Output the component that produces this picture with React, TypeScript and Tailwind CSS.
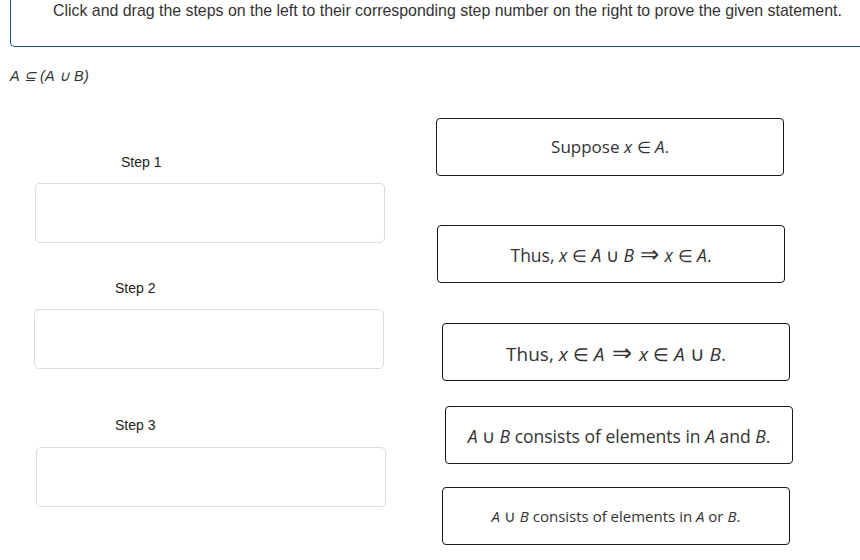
import React from "react";

const mathFont = { fontFamily: '"Open Sans", "Noto Sans", sans-serif' };

function I({ children }: { children: React.ReactNode }) {
  return <span className="italic">{children}</span>;
}

function Sym({ children, size = "text-[1em]" }: { children: React.ReactNode; size?: string }) {
  return (
    <span style={{ fontFamily: '"DejaVu Sans", sans-serif' }} className={`${size} font-light`}>
      {children}
    </span>
  );
}

function RightBox({ children, className }: { children: React.ReactNode; className: string }) {
  return (
    <div
      className={`w-[348px] h-[58px] border border-[#1a1a1a] rounded-[4px] flex items-center justify-center text-[#333] whitespace-pre ${className}`}
      style={mathFont}
    >
      {children}
    </div>
  );
}

function Step({ label, labelMl, boxMl, labelMt, boxMt }: { label: string; labelMl: string; boxMl: string; labelMt: string; boxMt: string }) {
  return (
    <div className="flex flex-col">
      <div className={`h-[20px] leading-[20px] text-[14px] text-[#222] ${labelMl} ${labelMt}`}>{label}</div>
      <div className={`w-[350px] h-[60px] border border-[#dcdcdc] rounded-[5px] ${boxMl} ${boxMt}`} />
    </div>
  );
}

const IN = () => <Sym size="text-[0.95em]">∈</Sym>;
const CUP = () => <Sym size="text-[1.05em]">∪</Sym>;
const IMP = () => (
  <span className="inline-block w-[1.75em] text-center">
    <Sym size="text-[1.3em]">⇒</Sym>
  </span>
);
const IMP2 = () => (
  <span className="inline-block w-[1.3em] text-center">
    <Sym size="text-[1.25em]">⇒</Sym>
  </span>
);

export default function App() {
  return (
    <div className="w-[860px] h-[560px] bg-white overflow-hidden relative" style={{ fontFamily: '"Liberation Sans", Arial, sans-serif' }}>
      <div className="ml-[10px] h-[47px] border-l border-b border-[#1f4f8f] rounded-bl-[5px] pl-[42px] text-[15.9px] leading-[22px] text-[#333]">
        Click and drag the steps on the left to their corresponding step number on the right to prove the given statement.
      </div>
      <div className="ml-[10px] mt-[20px] h-[18px] leading-[18px] text-[14.5px] text-[#333] italic tracking-[0.2px]">
        A ⊆ (A ∪ B)
      </div>
      <div className="flex">
        <div className="flex flex-col w-[400px]">
          <Step label="Step 1" labelMl="ml-[121px]" boxMl="ml-[35px]" labelMt="mt-[67px]" boxMt="mt-[11px]" />
          <Step label="Step 2" labelMl="ml-[115px]" boxMl="ml-[34px]" labelMt="mt-[35px]" boxMt="mt-[11px]" />
          <Step label="Step 3" labelMl="ml-[115px]" boxMl="ml-[36px]" labelMt="mt-[46px]" boxMt="mt-[12px]" />
        </div>
        <div className="flex flex-col">
          <RightBox className="ml-[36px] mt-[33px] text-[17px]">
            <span>Suppose <I>x</I> <IN /> <I>A</I>.</span>
          </RightBox>
          <RightBox className="ml-[37px] mt-[49px] text-[17.5px]">
            <span>Thus, <I>x</I> <IN /> <I>A</I> <CUP /> <I>B</I><IMP /><I>x</I> <IN /> <I>A</I>.</span>
          </RightBox>
          <RightBox className="ml-[42px] mt-[40px] text-[19px] pt-[3px]">
            <span>Thus, <I>x</I> <IN /> <I>A</I> <IMP2 /> <I>x</I> <IN /> <I>A</I> <CUP /> <I>B</I>.</span>
          </RightBox>
          <RightBox className="ml-[45px] mt-[25px] text-[17.5px] pt-[3px]">
            <span><I>A</I> <CUP /> <I>B</I> consists of elements in <I>A</I> and <I>B</I>.</span>
          </RightBox>
          <RightBox className="ml-[42px] mt-[23px] text-[15px] pt-[2px]">
            <span><I>A</I> <CUP /> <I>B</I> consists of elements in <I>A</I> or <I>B</I>.</span>
          </RightBox>
        </div>
      </div>
    </div>
  );
}
